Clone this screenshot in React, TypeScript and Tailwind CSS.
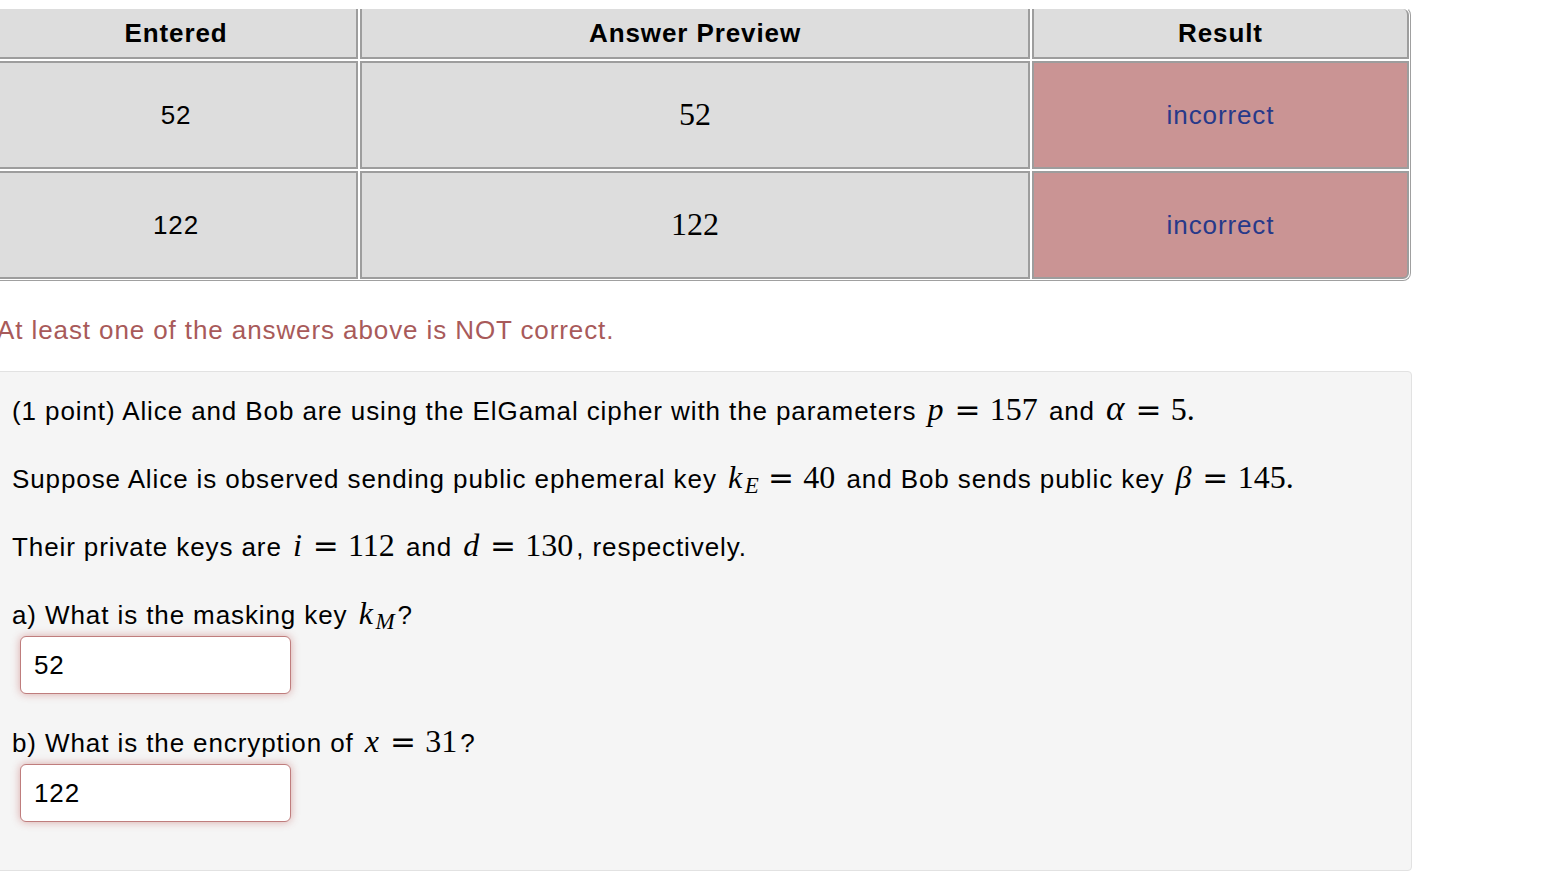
import React from 'react'

const sans = { fontFamily: '"Liberation Sans", Arial, sans-serif' }
const serif = { fontFamily: '"Liberation Serif", "Times New Roman", serif' }
const eqFont = { fontFamily: '"DejaVu Sans", sans-serif' }

function Eq() {
    return (
        <span className="px-[0.3em] text-[31px] not-italic" style={eqFont}>
            =
        </span>
    )
}

function M({ children }: { children: React.ReactNode }) {
    return (
        <span className="mx-[3px] text-[32px] leading-none tracking-normal" style={serif}>
            {children}
        </span>
    )
}

function V({ children, wide }: { children: React.ReactNode; wide?: boolean }) {
    return <i className={wide ? 'pr-[0.05em] text-[35px]' : 'pr-[0.05em]'}>{children}</i>
}

function Sub({ children }: { children: React.ReactNode }) {
    return (
        <sub className="relative top-[0.2em] ml-[1px] align-baseline text-[23px] italic">{children}</sub>
    )
}

function Cell({
    children,
    bad,
    head,
    className = '',
}: {
    children: React.ReactNode
    bad?: boolean
    head?: boolean
    className?: string
}) {
    return (
        <div
            className={
                'flex items-center justify-center border-2 border-[#9d9d9d] ' +
                (head ? 'border-t-0 font-bold text-black ' : '') +
                (bad ? 'bg-[#ca9494] text-[#27398a] ' : 'bg-[#dddddd] text-black ') +
                className
            }
        >
            {children}
        </div>
    )
}

function Answer({ value }: { value: string }) {
    return (
        <div className="ml-2 mt-[3px] flex h-[58px] w-[271px] items-center rounded-md border border-[#bf7d7d] bg-white pl-[13px] text-[26px] shadow-[0_0_8px_rgba(185,74,72,0.45)]">
            {value}
        </div>
    )
}

export default function App() {
    return (
        <div
            className="min-h-screen overflow-hidden bg-white text-[26px] tracking-[0.9px] text-black"
            style={sans}
        >
            <div className="ml-[-8px] mt-[7px] w-[1419px] rounded-r-lg border border-t-transparent border-[#a0a0a0] p-px">
                <div className="grid grid-cols-[364px_670px_377px] grid-rows-[50px_108px_108px] gap-[2px]">
                    <Cell head>Entered</Cell>
                    <Cell head>Answer Preview</Cell>
                    <Cell head className="rounded-tr-md">
                        Result
                    </Cell>
                    <Cell>52</Cell>
                    <Cell>
                        <span className="-mt-[3px] text-[32px] tracking-normal" style={serif}>
                            52
                        </span>
                    </Cell>
                    <Cell bad>incorrect</Cell>
                    <Cell>122</Cell>
                    <Cell>
                        <span className="-mt-[3px] text-[32px] tracking-normal" style={serif}>
                            122
                        </span>
                    </Cell>
                    <Cell bad className="rounded-br-md">
                        incorrect
                    </Cell>
                </div>
            </div>

            <p className="ml-[-3px] mt-[34px] leading-[30px] text-[#a85a5a]">
                At least one of the answers above is NOT correct.
            </p>

            <div className="ml-[-8px] mt-[26px] w-[1420px] rounded border border-[#e2e2e2] bg-[#f5f5f5] pb-[48px] pl-[19px] pt-[19px]">
                <p className="leading-[36px]">
                    (1 point) Alice and Bob are using the ElGamal cipher with the parameters{' '}
                    <M>
                        <V>p</V>
                        <Eq />
                        157
                    </M>{' '}
                    and{' '}
                    <M>
                        <V wide>α</V>
                        <Eq />
                        5.
                    </M>
                </p>
                <p className="mt-[32px] leading-[36px]">
                    Suppose Alice is observed sending public ephemeral key{' '}
                    <M>
                        <V>k</V>
                        <Sub>E</Sub>
                        <Eq />
                        40
                    </M>{' '}
                    and Bob sends public key{' '}
                    <M>
                        <V>β</V>
                        <Eq />
                        145.
                    </M>
                </p>
                <p className="mt-[32px] leading-[36px]">
                    Their private keys are{' '}
                    <M>
                        <V>i</V>
                        <Eq />
                        112
                    </M>{' '}
                    and{' '}
                    <M>
                        <V>d</V>
                        <Eq />
                        130
                    </M>
                    , respectively.
                </p>
                <p className="mt-[32px] leading-[36px]">
                    a) What is the masking key{' '}
                    <M>
                        <V>k</V>
                        <Sub>M</Sub>
                    </M>
                    ?
                </p>
                <Answer value="52" />
                <p className="mt-[31px] leading-[36px]">
                    b) What is the encryption of{' '}
                    <M>
                        <V>x</V>
                        <Eq />
                        31
                    </M>
                    ?
                </p>
                <Answer value="122" />
            </div>
        </div>
    )
}
